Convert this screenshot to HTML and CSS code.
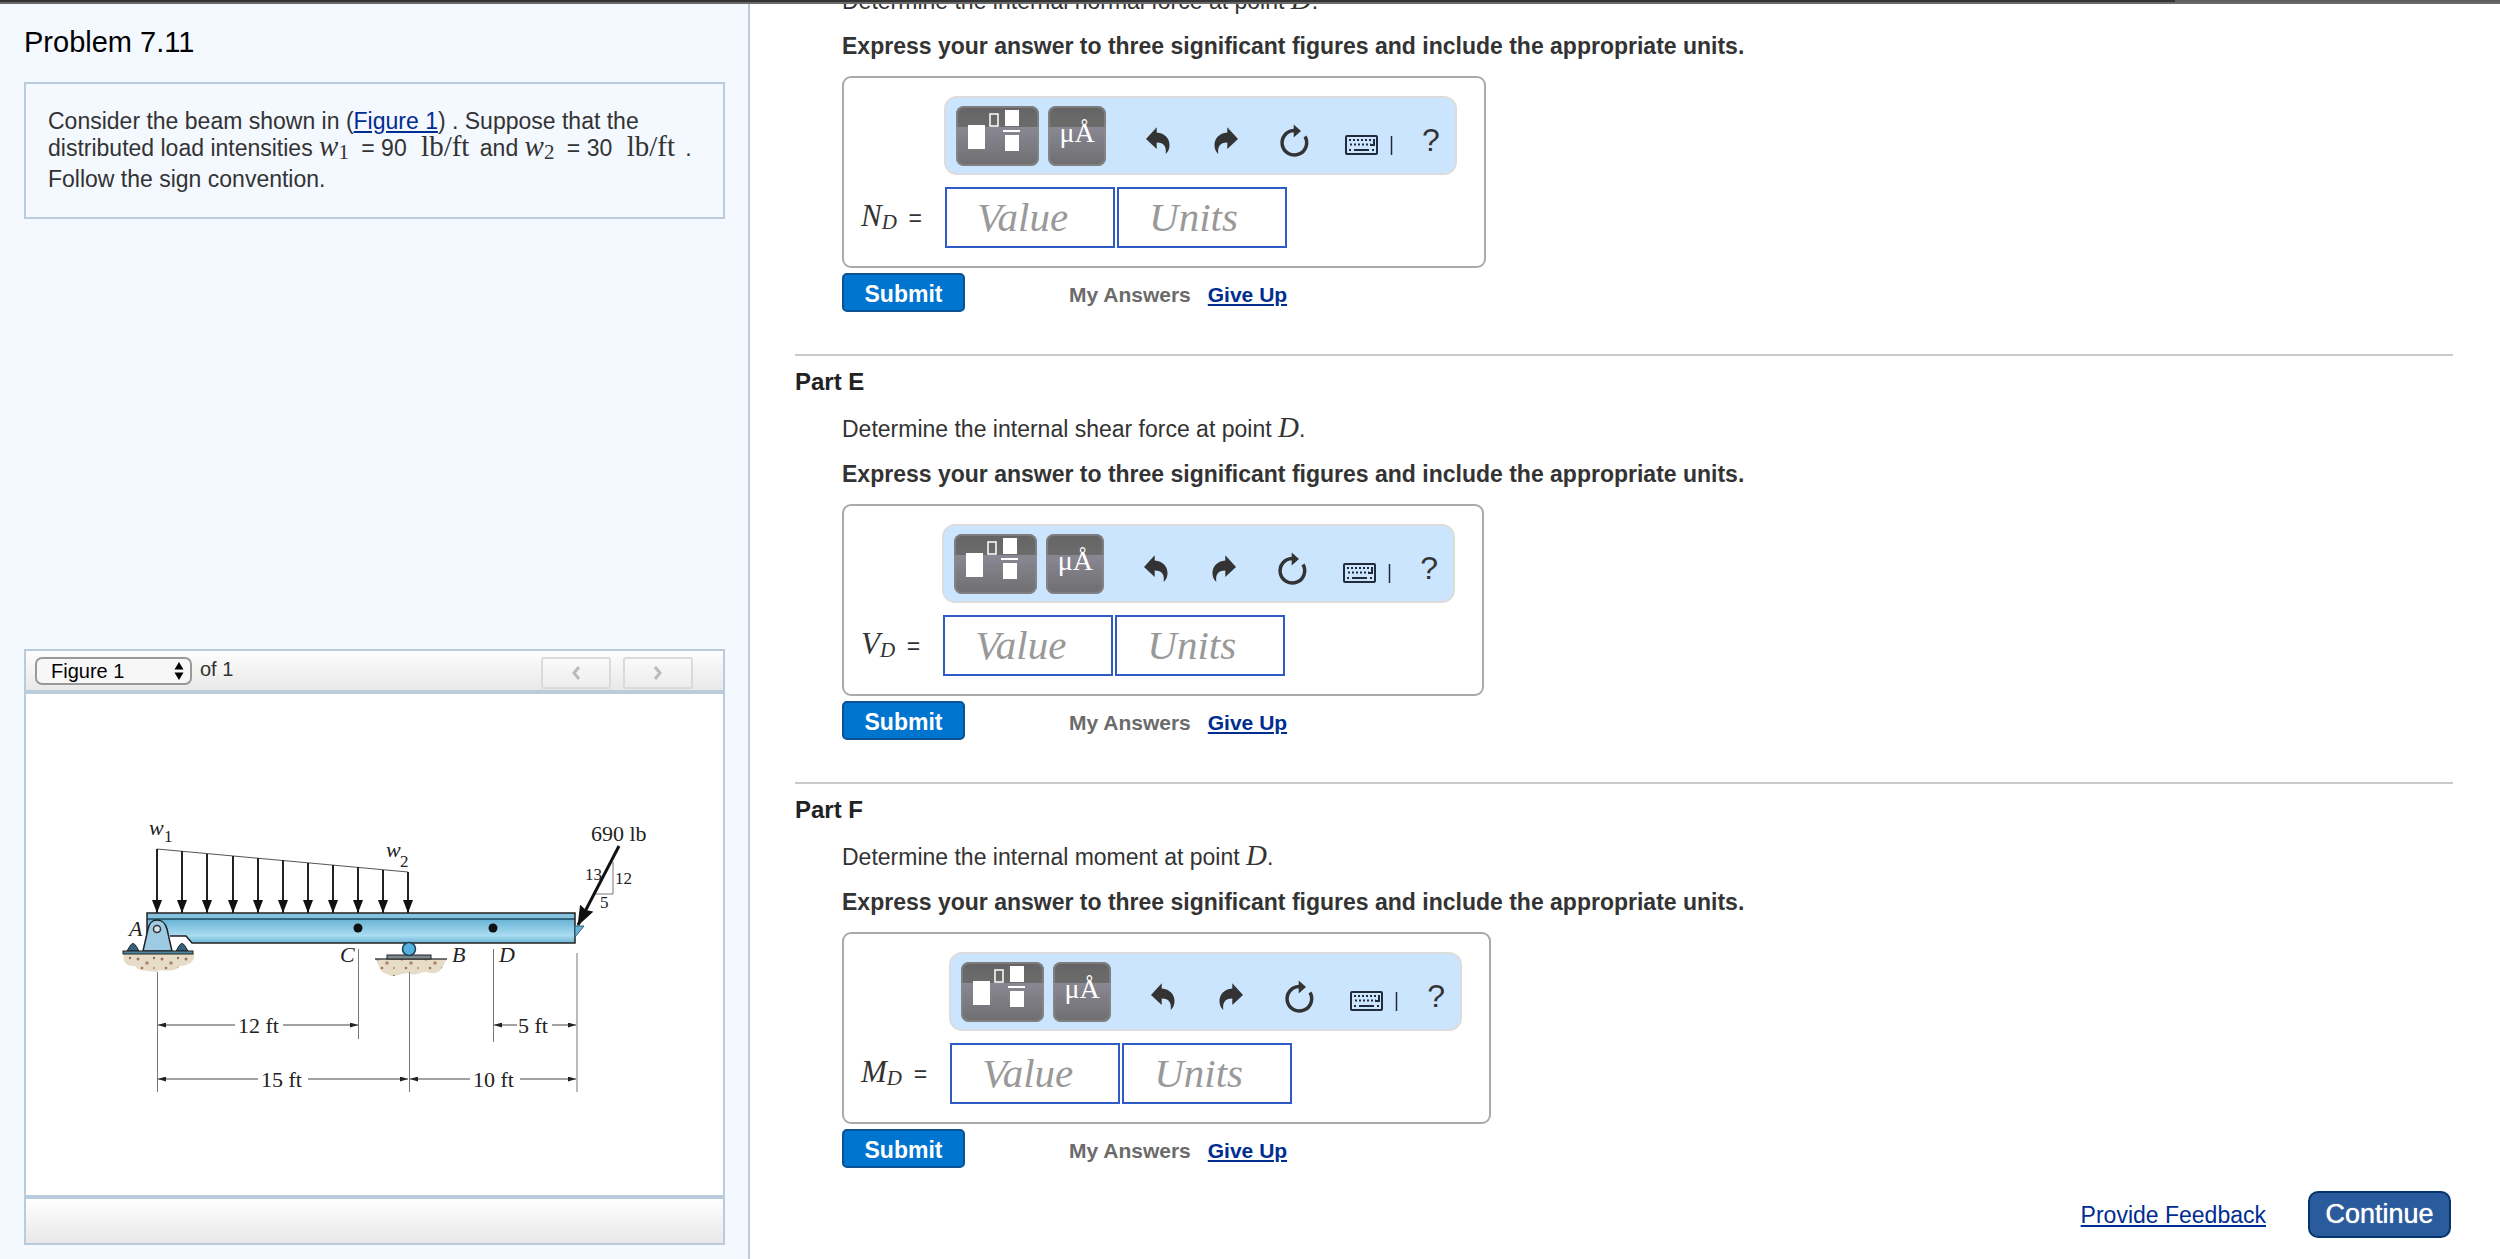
FILE: index.html
```
<!DOCTYPE html>
<html lang="en">

<head>
    <meta charset="UTF-8">
    <meta name="viewport" content="width=device-width, initial-scale=1.0">
    <title>Problem 7.11</title>
    <link rel="stylesheet" href="styles.css">
</head>

<body>
    <!-- shared toolbar icons -->
    <svg class="sprite" aria-hidden="true">
        <symbol id="icon-templates" viewBox="0 0 83 60">
            <rect x="12" y="19" width="17" height="24" fill="#fff" />
            <rect x="34" y="8" width="8" height="12" fill="none" stroke="#fff" stroke-width="1.5" />
            <rect x="49" y="4" width="14" height="16" fill="#fff" />
            <rect x="47" y="24" width="17" height="2" fill="#fff" />
            <rect x="49" y="29" width="14" height="16" fill="#fff" />
        </symbol>
        <symbol id="icon-undo" viewBox="0 0 68 60">
            <path d="M22 33 L32.7 21.3 V26.5 C41 27 46 33 45.5 40 C45.3 43 44 46 41.7 48 C42.5 41 40.5 36.5 32.7 36.5 V43 Z" />
        </symbol>
        <symbol id="icon-redo" viewBox="0 0 68 60">
            <path d="M46 33 L35.3 21.3 V26.5 C27 27 22 33 22.5 40 C22.7 43 24 46 26.3 48 C25.5 41 27.5 36.5 35.3 36.5 V43 Z" />
        </symbol>
        <symbol id="icon-reset" viewBox="0 0 68 60">
            <path d="M34 24.4 A12.3 12.3 0 1 0 45 30.5" fill="none" stroke="#333" stroke-width="3.5" />
            <path d="M33.7 18.5 L41 25 L33.7 31.5 Z" />
        </symbol>
        <symbol id="icon-keyboard" viewBox="0 0 68 60">
            <rect x="18" y="30" width="31" height="18" rx="1" fill="none" stroke="#222b3a" stroke-width="2" />
            <path d="M21 34 H44 M22 38.500 H43" fill="none" stroke="#222b3a" stroke-width="2" stroke-dasharray="2 2" />
            <path d="M46 33 V39 H42 M26 44 H41 M21 44 H23 M44 44 H46" fill="none" stroke="#222b3a" stroke-width="2" />
            <path d="M63.500 30 V49" stroke="#222b3a" stroke-width="1.500" />
        </symbol>
    </svg>

    <div class="top-bar"></div>

    <div class="page">
        <aside class="sidebar">
            <h1>Problem 7.11</h1>
            <div class="statement">
                Consider the beam shown in (<a href="#figure">Figure 1</a>) . Suppose that the<br>
                distributed load intensities <span class="math"><i>w</i><sub>1</sub></span> = 90 <span class="unit">lb/ft</span> and <span class="math"><i>w</i><sub>2</sub></span> = 30 <span class="unit">lb/ft</span> .<br>
                Follow the sign convention.
            </div>

            <section class="figure" id="figure">
                <div class="figure-head">
                    <span class="select-box">
                        <select id="figureSelect" aria-label="Figure">
                            <option>Figure 1</option>
                        </select>
                        <svg class="select-arrows" width="10" height="20" viewBox="0 0 10 20" aria-hidden="true">
                            <path d="M5 1 L9.500 8.500 H0.500 Z M5 19 L9.500 11.500 H0.500 Z" />
                        </svg>
                    </span>
                    <label for="figureSelect">of 1</label>
                    <div class="figure-nav">
                        <button type="button" aria-label="Previous figure" disabled>
                            <svg width="12" height="16" viewBox="0 0 12 16"><path d="M9 2 L4 8 L9 14" /></svg>
                        </button>
                        <button type="button" aria-label="Next figure" disabled>
                            <svg width="12" height="16" viewBox="0 0 12 16"><path d="M3 2 L8 8 L3 14" /></svg>
                        </button>
                    </div>
                </div>

                <div class="figure-body">
                    <svg class="beam" viewBox="0 0 530 290" role="img" aria-label="Loaded beam">
                        <defs>
                            <linearGradient id="web" x1="0" y1="0" x2="0" y2="1">
                                <stop offset="0" stop-color="#4fa3c9" />
                                <stop offset="0.75" stop-color="#a9dcf1" />
                                <stop offset="1" stop-color="#6db5d6" />
                            </linearGradient>
                            <pattern id="soil" width="24" height="18" patternUnits="userSpaceOnUse" y="1">
                                <rect width="24" height="18" fill="#e6dcc8" />
                                <circle cx="4" cy="5" r="1.500" fill="#a3705c" />
                                <circle cx="13" cy="9" r="1.800" fill="#b08468" />
                                <circle cx="20" cy="4" r="1.200" fill="#8f6a5a" />
                                <circle cx="8" cy="14" r="1.300" fill="#a3705c" />
                                <circle cx="20" cy="14" r="1.200" fill="#c2a184" />
                            </pattern>
                            <marker id="load" markerUnits="userSpaceOnUse" markerWidth="13" markerHeight="10" refX="13" refY="5" orient="auto">
                                <path d="M0 0 L13 5 L0 10 Z" fill="#111" />
                            </marker>
                            <marker id="force" markerUnits="userSpaceOnUse" markerWidth="20" markerHeight="15" refX="19" refY="7.500" orient="auto">
                                <path d="M0 0 L20 7.500 L0 15 L2 7.500 Z" fill="#111" />
                            </marker>
                            <marker id="dim" markerUnits="userSpaceOnUse" markerWidth="8" markerHeight="5" refX="8" refY="2.500" orient="auto">
                                <path d="M0 0 L8 2.500 L0 5 Z" fill="#222" />
                            </marker>
                        </defs>

                        <!-- supports -->
                        <path d="M14 145 H84 C86 152 78 157 70 157 C62 166 52 158 46 163 C38 161 30 164 25 157 C16 158 12 152 14 145 Z" fill="url(#soil)" />
                        <path d="M265 150 H337 C332 158 331 166 320 164 C312 160 306 169 299 164 C290 164 284 170 277 165 C268 163 270 156 265 150 Z" fill="url(#soil)" />
                        <path d="M265 150 H337" stroke="#444" stroke-width="1.500" />
                        <rect x="277" y="146" width="44" height="4" fill="#7d8a91" stroke="#222" />

                        <!-- beam -->
                        <path d="M37 104 H465 V134 H82 L76 127 H37 Z" fill="url(#web)" />
                        <rect x="37" y="104" width="428" height="6" fill="#86c2dd" />
                        <path d="M37 110 H465" stroke="#1e4a5f" stroke-width="1.500" />
                        <path d="M60 127 H76 L82 134 H465 V104 H37 V127" fill="none" stroke="#222" stroke-width="1.500" />
                        <path d="M465 117 H474 L465 128 Z" fill="#6db5d6" stroke="#2b5f78" />
                        <path d="M33 142 L38 120 C40 108 54 108 57 120 L62 142 Z" fill="#9ccbe3" stroke="#222" stroke-width="1.500" />
                        <circle cx="47" cy="120" r="3.500" fill="#d9e4ea" stroke="#333" stroke-width="1.500" />
                        <path d="M17 142 L20 137 Q23 132 26 137 L29 142 Z M66 142 L69 137 Q72 132 75 137 L78 142 Z" fill="#34627a" stroke="#222" />
                        <rect x="13" y="142" width="70" height="3" fill="#4f86a0" stroke="#222" />
                        <circle cx="299" cy="140" r="6.500" fill="#55b0dd" stroke="#1c4154" stroke-width="1.500" />
                        <circle cx="248" cy="119" r="4.500" fill="#111" />
                        <circle cx="383" cy="119" r="4.500" fill="#111" />

                        <!-- distributed load -->
                        <path d="M47 40 L298 63" stroke="#555" />
                        <g stroke="#222" stroke-width="2">
                            <path d="M47 40 V104" marker-end="url(#load)" />
                            <path d="M72 42 V104" marker-end="url(#load)" />
                            <path d="M97 45 V104" marker-end="url(#load)" />
                            <path d="M123 47 V104" marker-end="url(#load)" />
                            <path d="M148 49 V104" marker-end="url(#load)" />
                            <path d="M173 51 V104" marker-end="url(#load)" />
                            <path d="M198 54 V104" marker-end="url(#load)" />
                            <path d="M223 56 V104" marker-end="url(#load)" />
                            <path d="M248 58 V104" marker-end="url(#load)" />
                            <path d="M273 61 V104" marker-end="url(#load)" />
                            <path d="M298 63 V104" marker-end="url(#load)" />
                        </g>

                        <!-- inclined force -->
                        <path d="M503 53 V85 H485" fill="none" stroke="#777" />
                        <path d="M509 37 L468 116" stroke="#111" stroke-width="3" marker-end="url(#force)" />

                        <!-- dimensions -->
                        <path d="M47.500 163 V283 M248.500 140 V230 M299.500 163 V283 M383.500 140 V233 M467 144 V283" stroke="#777" />
                        <g stroke="#444">
                            <path d="M125 216 H48" marker-end="url(#dim)" />
                            <path d="M173 216 H248" marker-end="url(#dim)" />
                            <path d="M407 216 H384" marker-end="url(#dim)" />
                            <path d="M442 216 H466" marker-end="url(#dim)" />
                            <path d="M148 270 H48" marker-end="url(#dim)" />
                            <path d="M198 270 H298" marker-end="url(#dim)" />
                            <path d="M360 270 H300" marker-end="url(#dim)" />
                            <path d="M410 270 H466" marker-end="url(#dim)" />
                        </g>

                        <g class="beam-text">
                            <text x="128" y="224">12 ft</text>
                            <text x="408" y="224">5 ft</text>
                            <text x="151" y="278">15 ft</text>
                            <text x="363" y="278">10 ft</text>
                            <text x="481" y="32">690 lb</text>
                        </g>
                        <g class="beam-text beam-point">
                            <text x="39" y="26">w</text>
                            <text x="276" y="48">w</text>
                            <text x="19" y="127">A</text>
                            <text x="230" y="153">C</text>
                            <text x="342" y="153">B</text>
                            <text x="389" y="153">D</text>
                        </g>
                        <g class="beam-text beam-small">
                            <text x="54" y="33">1</text>
                            <text x="290" y="58">2</text>
                            <text x="475" y="71">13</text>
                            <text x="505" y="75">12</text>
                            <text x="490" y="99">5</text>
                        </g>
                    </svg>
                </div>
                <div class="figure-foot"></div>
            </section>
        </aside>

        <main class="content">
            <section class="part">
                <div class="part-body">
                    <p>Determine the internal normal force at point <i class="point">D</i>.</p>
                    <p class="hint">Express your answer to three significant figures and include the appropriate units.</p>
                    <div class="answer">
                        <div class="toolbar">
                            <button type="button" class="palette templates" aria-label="Templates"><svg width="83" height="60"><use href="#icon-templates" /></svg></button>
                            <button type="button" class="palette symbols">μÅ</button>
                            <button type="button" class="tool" aria-label="Undo"><svg width="68" height="60"><use href="#icon-undo" /></svg></button>
                            <button type="button" class="tool" aria-label="Redo"><svg width="68" height="60"><use href="#icon-redo" /></svg></button>
                            <button type="button" class="tool" aria-label="Reset"><svg width="68" height="60"><use href="#icon-reset" /></svg></button>
                            <button type="button" class="tool" aria-label="Keyboard shortcuts"><svg width="68" height="60"><use href="#icon-keyboard" /></svg></button>
                            <button type="button" class="help">?</button>
                        </div>
                        <label for="valueD"><i>N</i><sub>D</sub> <span class="equals">=</span></label>
                        <div class="fields">
                            <input type="text" id="valueD" placeholder="Value">
                            <input type="text" placeholder="Units" aria-label="Units">
                        </div>
                    </div>
                    <div class="actions">
                        <button type="button" class="submit-btn">Submit</button>
                        <span class="my-answers">My Answers</span>
                        <a href="#">Give Up</a>
                    </div>
                </div>
            </section>

            <section class="part">
                <h2>Part E</h2>
                <div class="part-body">
                    <p>Determine the internal shear force at point <i class="point">D</i>.</p>
                    <p class="hint">Express your answer to three significant figures and include the appropriate units.</p>
                    <div class="answer">
                        <div class="toolbar">
                            <button type="button" class="palette templates" aria-label="Templates"><svg width="83" height="60"><use href="#icon-templates" /></svg></button>
                            <button type="button" class="palette symbols">μÅ</button>
                            <button type="button" class="tool" aria-label="Undo"><svg width="68" height="60"><use href="#icon-undo" /></svg></button>
                            <button type="button" class="tool" aria-label="Redo"><svg width="68" height="60"><use href="#icon-redo" /></svg></button>
                            <button type="button" class="tool" aria-label="Reset"><svg width="68" height="60"><use href="#icon-reset" /></svg></button>
                            <button type="button" class="tool" aria-label="Keyboard shortcuts"><svg width="68" height="60"><use href="#icon-keyboard" /></svg></button>
                            <button type="button" class="help">?</button>
                        </div>
                        <label for="valueE"><i>V</i><sub>D</sub> <span class="equals">=</span></label>
                        <div class="fields">
                            <input type="text" id="valueE" placeholder="Value">
                            <input type="text" placeholder="Units" aria-label="Units">
                        </div>
                    </div>
                    <div class="actions">
                        <button type="button" class="submit-btn">Submit</button>
                        <span class="my-answers">My Answers</span>
                        <a href="#">Give Up</a>
                    </div>
                </div>
            </section>

            <section class="part">
                <h2>Part F</h2>
                <div class="part-body">
                    <p>Determine the internal moment at point <i class="point">D</i>.</p>
                    <p class="hint">Express your answer to three significant figures and include the appropriate units.</p>
                    <div class="answer">
                        <div class="toolbar">
                            <button type="button" class="palette templates" aria-label="Templates"><svg width="83" height="60"><use href="#icon-templates" /></svg></button>
                            <button type="button" class="palette symbols">μÅ</button>
                            <button type="button" class="tool" aria-label="Undo"><svg width="68" height="60"><use href="#icon-undo" /></svg></button>
                            <button type="button" class="tool" aria-label="Redo"><svg width="68" height="60"><use href="#icon-redo" /></svg></button>
                            <button type="button" class="tool" aria-label="Reset"><svg width="68" height="60"><use href="#icon-reset" /></svg></button>
                            <button type="button" class="tool" aria-label="Keyboard shortcuts"><svg width="68" height="60"><use href="#icon-keyboard" /></svg></button>
                            <button type="button" class="help">?</button>
                        </div>
                        <label for="valueF"><i>M</i><sub>D</sub> <span class="equals">=</span></label>
                        <div class="fields">
                            <input type="text" id="valueF" placeholder="Value">
                            <input type="text" placeholder="Units" aria-label="Units">
                        </div>
                    </div>
                    <div class="actions">
                        <button type="button" class="submit-btn">Submit</button>
                        <span class="my-answers">My Answers</span>
                        <a href="#">Give Up</a>
                    </div>
                </div>
            </section>

            <div class="page-actions">
                <a href="#">Provide Feedback</a>
                <button type="button" class="continue-btn">Continue</button>
            </div>
        </main>
    </div>
</body>

</html>
```

FILE: styles.css
```
* {
    box-sizing: border-box;
}

body {
    margin: 0;
    height: 100vh;
    display: flex;
    flex-direction: column;
    overflow: hidden;
    font-family: "Liberation Sans", Arial, sans-serif;
    font-size: 23px;
    line-height: 30px;
    color: #333;
    background-color: #fff;
}

h1,
h2,
p {
    margin: 0;
}

a {
    color: #002d91;
}

button,
input,
select {
    font-family: inherit;
    margin: 0;
}

.sprite {
    display: none;
}

.top-bar {
    flex: none;
    height: 4px;
    background: linear-gradient(to right, #333 87%, #606060 87%) top / 100% 2px no-repeat #696969;
    z-index: 1;
}

.page {
    flex: 1;
    display: flex;
    min-height: 0;
}

/* left column */
.sidebar {
    width: 30%;
    display: flex;
    flex-direction: column;
    padding: 20px 23px 14px 24px;
    background-color: #f4f8ff;
    border-right: 2px solid #bccbe0;
}

h1 {
    font-size: 29px;
    font-weight: normal;
    line-height: 36px;
    color: #000;
}

.statement {
    margin-top: 22px;
    padding: 24px 0 14px 22px;
    line-height: 27px;
    height: 137px;
    white-space: nowrap;
    border: 2px solid #bacbdc;
}

.math,
.unit {
    display: inline-block;
    font-family: "Liberation Serif", "Times New Roman", serif;
    font-size: 29px;
    line-height: 22px;
}

.math {
    margin-right: 6px;
}

.unit {
    margin: 0 4px 0 8px;
    padding-bottom: 9px;
}

sub {
    font-size: 21px;
    line-height: 0;
    vertical-align: -3px;
}

.figure {
    margin-top: auto;
    border: 2px solid #bacbdc;
    background-color: #fff;
}

.figure-head {
    display: flex;
    align-items: flex-start;
    gap: 8px;
    height: 43px;
    padding: 6px 30px 0 9px;
    font-size: 20px;
    line-height: 24px;
    background: linear-gradient(#fdfdfd, #e9e9e9);
    border-bottom: 4px solid #bacbdc;
}

.select-box {
    position: relative;
}

.select-box select {
    appearance: none;
    display: block;
    width: 157px;
    height: 28px;
    padding: 0 28px 1px 14px;
    font-size: 20px;
    line-height: 22px;
    color: #000;
    background: #f7f7f7;
    border: 2px solid #999;
    border-radius: 7px;
}

.select-arrows {
    position: absolute;
    right: 8px;
    top: 4px;
    pointer-events: none;
}

.figure-nav {
    display: flex;
    gap: 12px;
    margin-left: auto;
}

.figure-nav button {
    width: 70px;
    height: 32px;
    padding: 0;
    background: linear-gradient(#fafafa, #ededed);
    border: 2px solid #dadada;
    border-radius: 3px;
}

.figure-nav svg {
    display: block;
    margin: 0 auto;
    fill: none;
    stroke: #bbb;
    stroke-width: 3;
}

.figure-body {
    padding: 115px 83px 96px 84px;
}

.beam {
    display: block;
    width: 100%;
    max-width: 600px;
    overflow: visible;
}

.beam-text {
    font-family: "Liberation Serif", "Times New Roman", serif;
    font-size: 22px;
    fill: #222;
}

.beam-point {
    font-style: italic;
}

.beam-small {
    font-size: 17px;
}

.figure-foot {
    height: 48px;
    background: linear-gradient(#fff, #e8e8e8);
    border-top: 4px solid #bacbdc;
}

/* right column */
.content {
    flex: 1;
    margin-top: -18px;
    padding: 0 47px 0 45px;
}

.part + .part {
    margin-top: 42px;
    padding-top: 12px;
    border-top: 2px solid #c9c9c9;
}

h2 {
    margin-bottom: 18px;
    font-size: 24px;
    line-height: 28px;
    color: #222;
}

.part-body {
    padding-left: 47px;
}

.hint {
    margin: 15px 0;
    font-weight: bold;
}

.point {
    font-family: "Liberation Serif", "Times New Roman", serif;
    font-size: 29px;
    line-height: 0;
}

.answer {
    display: grid;
    grid-template-columns: auto auto;
    width: max-content;
    row-gap: 12px;
    padding: 18px 27px 18px 17px;
    border: 2px solid #aaa;
    border-radius: 9px;
}

.toolbar {
    grid-column: 2;
    display: flex;
    width: 513px;
    height: 79px;
    padding: 8px 0 0 10px;
    background-color: #cce5ff;
    border: 2px solid #dcdcdc;
    border-radius: 13px;
}

.palette {
    height: 60px;
    padding: 0;
    color: #fff;
    background: linear-gradient(#646464, #6c6c6c 35%, #8a8893 35%, #6e6e70);
    border: 0;
    border-radius: 8px;
    box-shadow: inset 0 0 0 2px rgba(140, 140, 140, 0.6);
}

.templates {
    width: 83px;
    margin-right: 9px;
}

.symbols {
    width: 58px;
    margin-right: 18px;
    padding-bottom: 6px;
    font-family: "Liberation Serif", "Times New Roman", serif;
    font-size: 28px;
}

.palette svg,
.tool svg {
    display: block;
}

.tool {
    width: 68px;
    height: 60px;
    padding: 0;
    fill: #333;
    background: none;
    border: 0;
}

.help {
    height: 60px;
    padding: 8px 0 0 26px;
    font-size: 32px;
    line-height: 36px;
    color: #333;
    background: none;
    border: 0;
}

.answer label {
    grid-column: 1;
    align-self: center;
    padding: 0 22px 2px 0;
    white-space: nowrap;
    font-family: "Liberation Serif", "Times New Roman", serif;
    font-size: 31px;
}

.answer label sub {
    font-style: italic;
}

.equals {
    margin-left: 4px;
    font-family: "Liberation Sans", Arial, sans-serif;
    font-size: 23px;
}

.fields {
    grid-column: 2;
    display: flex;
    gap: 2px;
    padding-left: 1px;
}

.fields input {
    width: 170px;
    height: 61px;
    padding: 0 0 2px 30px;
    font-family: "Liberation Serif", "Times New Roman", serif;
    font-size: 41px;
    font-style: italic;
    color: #333;
    background-color: #fff;
    border: 2px solid #2f5bc7;
}

.fields input::placeholder {
    color: #999;
    opacity: 1;
}

.actions {
    display: flex;
    align-items: center;
    margin-top: 5px;
    font-size: 21px;
    font-weight: bold;
}

.my-answers,
.actions a {
    padding-top: 4px;
}

.submit-btn {
    width: 123px;
    height: 39px;
    margin-right: 104px;
    padding: 4px 0 0;
    font-size: 23px;
    font-weight: bold;
    color: #fff;
    background-color: #0075cf;
    border: 2px solid #0a5293;
    border-radius: 5px;
}

.my-answers {
    margin-right: 17px;
    color: #6b6b6b;
}

.page-actions {
    display: flex;
    justify-content: flex-end;
    align-items: center;
    gap: 42px;
    margin-top: 23px;
    padding-right: 2px;
}

.continue-btn {
    width: 143px;
    height: 47px;
    padding: 0;
    font-size: 27px;
    color: #fff;
    text-shadow: 0 0 1px #fff;
    background-color: #2a5b9c;
    border: 2px solid #05336b;
    border-radius: 10px;
}
```
